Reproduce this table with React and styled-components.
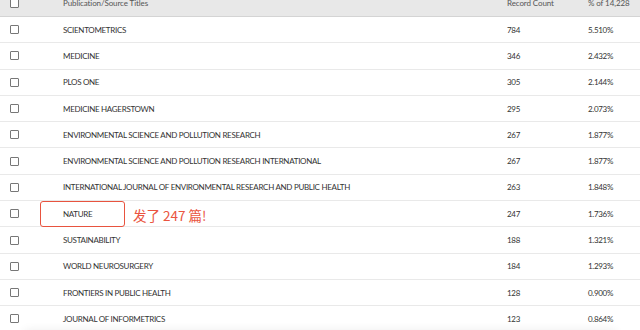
import React from 'react'
import styled, { createGlobalStyle } from 'styled-components'

const GlobalStyle = createGlobalStyle`
  html, body {
    margin: 0;
    padding: 0;
    background: #fff;
    overflow: hidden;
  }
  body {
    font-family: Lato, "Liberation Sans", sans-serif;
    color: #333;
  }
`

const Table = styled.div`
  width: 640px;
  height: 330px;
  overflow: hidden;
`

const Row = styled.div`
  position: relative;
  display: grid;
  grid-template-columns: 63px 444px 81px 1fr;
  align-items: center;
  box-sizing: border-box;
  height: 26.3px;
  border-bottom: 1px solid #e9e9e9;
  font-size: 8px;
  letter-spacing: -0.3px;
`

const HeaderRow = styled(Row)`
  margin-top: -10px;
  height: 27px;
  background: #e8e8e8;
  border-bottom: 1px solid #d4d4d4;
  color: #555;
  letter-spacing: -0.1px;
`

const CheckCell = styled.div`
  padding-left: 10px;
  display: flex;
  align-items: center;
`

const Box = styled.span`
  display: block;
  width: 9px;
  height: 9px;
  box-sizing: border-box;
  border: 1px solid #777;
  border-radius: 1px;
  background: #fff;
`

const Cell = styled.div`
  white-space: nowrap;
`

const Highlight = styled.div`
  position: absolute;
  left: 40px;
  top: 0;
  width: 85px;
  height: 26px;
  box-sizing: border-box;
  border: 1.5px solid #e8533f;
  border-radius: 3px;
`

const Note = styled.div`
  position: absolute;
  left: 133px;
  top: 4px;
  font-family: "Noto Sans CJK SC", sans-serif;
  font-size: 13.5px;
  letter-spacing: 0;
  color: #ea5440;
  white-space: nowrap;
`

const Shade = styled.div`
  margin: 0 24px;
  height: 10px;
  box-shadow: 0 -3px 10px rgba(0, 0, 0, 0.07);
`

const rows = [
  ['SCIENTOMETRICS', 784, '5.510%'],
  ['MEDICINE', 346, '2.432%'],
  ['PLOS ONE', 305, '2.144%'],
  ['MEDICINE HAGERSTOWN', 295, '2.073%'],
  ['ENVIRONMENTAL SCIENCE AND POLLUTION RESEARCH', 267, '1.877%'],
  ['ENVIRONMENTAL SCIENCE AND POLLUTION RESEARCH INTERNATIONAL', 267, '1.877%'],
  ['INTERNATIONAL JOURNAL OF ENVIRONMENTAL RESEARCH AND PUBLIC HEALTH', 263, '1.848%'],
  ['NATURE', 247, '1.736%'],
  ['SUSTAINABILITY', 188, '1.321%'],
  ['WORLD NEUROSURGERY', 184, '1.293%'],
  ['FRONTIERS IN PUBLIC HEALTH', 128, '0.900%'],
  ['JOURNAL OF INFORMETRICS', 123, '0.864%']
]

export default function App () {
  return (
    <Table>
      <GlobalStyle />
      <HeaderRow>
        <CheckCell><Box /></CheckCell>
        <Cell>Publication/Source Titles</Cell>
        <Cell>Record Count</Cell>
        <Cell>% of 14,228</Cell>
      </HeaderRow>
      {rows.map(([title, count, pct]) => (
        <Row key={title}>
          <CheckCell><Box /></CheckCell>
          <Cell>{title}</Cell>
          <Cell>{count}</Cell>
          <Cell>{pct}</Cell>
          {title === 'NATURE' && (
            <>
              <Highlight />
              <Note>发了 247 篇!</Note>
            </>
          )}
        </Row>
      ))}
      <Shade />
    </Table>
  )
}
